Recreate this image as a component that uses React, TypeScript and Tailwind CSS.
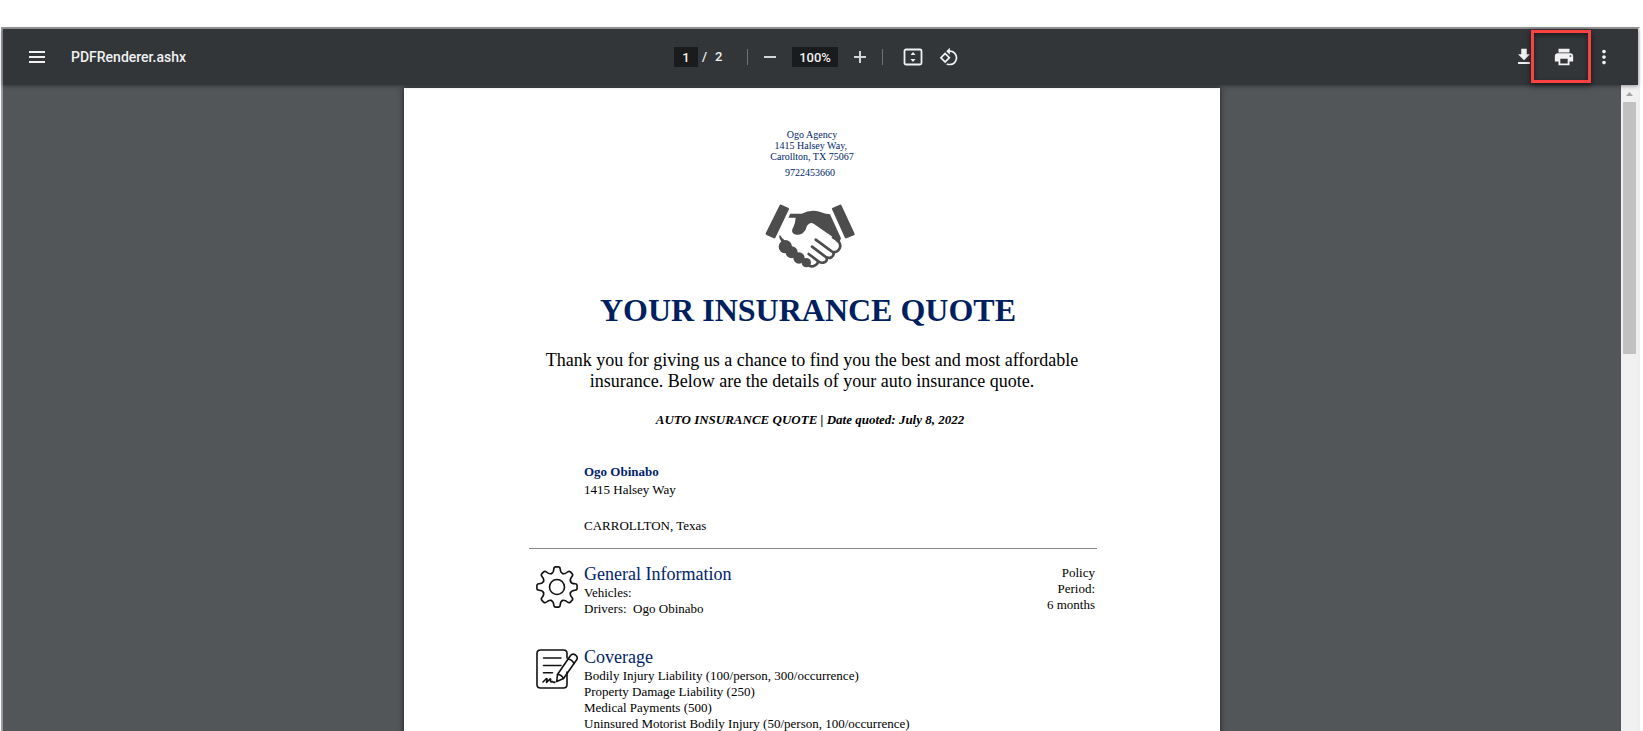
import React from "react";

const coverages = [
  "Bodily Injury Liability (100/person, 300/occurrence)",
  "Property Damage Liability (250)",
  "Medical Payments (500)",
  "Uninsured Motorist Bodily Injury (50/person, 100/occurrence)",
];

function IconButton({ label, children }: { label: string; children: React.ReactNode }) {
  return (
    <button type="button" aria-label={label} className="flex size-6 shrink-0 items-center justify-center">
      {children}
    </button>
  );
}

function Glyph({ d, className = "size-6" }: { d: string; className?: string }) {
  return (
    <svg viewBox="0 0 24 24" className={className} fill="currentColor" aria-hidden="true">
      <path d={d} />
    </svg>
  );
}

function Divider() {
  return <span className="h-4 w-px bg-white/30" />;
}

function Handshake() {
  return (
    <svg viewBox="76 268 270 192" className="h-16 w-[90px]" fill="#4d4d4d" role="img" aria-label="Handshake">
      <g stroke="#4d4d4d" strokeWidth="8" strokeLinejoin="round">
        <path d="M123 274 L144 283 L104 367 L82 357 Z" />
        <path d="M281 283 L302 274 L341 358 L319 367 Z" />
      </g>
      <path d="M152 297 H186 Q212 284 240 291 Q256 297 271 299 L304 371 Q301 380 298 384 Q290 374 276 365 L224 329 Q212 319 202 333 Q199 348 189 356 Q172 365 160 356 Q154 349 161 338 Q167 325 168 309 H146 Z" />
      <path d="M119 362 Q117 372 124 379 L129 385 L135 377 Q127 372 123 363 Z" />
      <circle cx="137" cy="396" r="20" />
      <circle cx="156" cy="413" r="18" />
      <circle cx="178" cy="430" r="17" />
      <circle cx="200" cy="444" r="14" />
      <g fill="none" stroke="#4d4d4d" strokeWidth="8" strokeLinecap="round" strokeLinejoin="round">
        <path d="M228 375 L276 410 C290 418 307 402 300 386 C297 379 290 374 280 368" />
        <path d="M217 396 L257 426 C270 435 285 426 281 413" />
        <path d="M207 418 L236 440 C250 449 263 442 261 431" />
        <path d="M203 449 Q214 460 226 452 Q236 447 235 440" />
      </g>
    </svg>
  );
}

function Gear() {
  return (
    <svg viewBox="0 0 42 42" className="size-[42px]" fill="none" stroke="#111" strokeWidth="1.6" strokeLinejoin="round" strokeLinecap="round" aria-hidden="true">
      <circle cx="21" cy="21" r="7.500" />
      {[0, 45, 90, 135, 180, 225, 270, 315].map((angle) => (
        <path
          key={angle}
          transform={`rotate(${angle} 21 21)`}
          d="M15.600 7.400 C17.200 6.800 17.600 6 17.800 3 C17.900 1.500 18.600 .9 19.800 .9 H22.200 C23.400 .9 24.100 1.500 24.200 3 C24.400 6 24.800 6.800 26.800 7.600"
        />
      ))}
    </svg>
  );
}

function SignedForm() {
  return (
    <svg viewBox="0 0 42 40" className="h-10 w-[42px]" fill="none" stroke="#111" strokeWidth="1.6" strokeLinecap="round" strokeLinejoin="round" aria-hidden="true">
      <path d="M31 9 V4.500 Q31 1 27.500 1 H4.500 Q1 1 1 4.500 V35.500 Q1 39 4.500 39 H27.500 Q31 39 31 35.500 V23" />
      <path d="M7.500 9 H25 M7.500 16.500 H25 M7.500 23.700 H16.500" />
      <path d="M7 33 L10 30 Q11.500 29 11 31 L10.500 33.500 L14 30 Q15 29.500 14.500 32 Q14.500 33.500 16.500 32.500 Q17.500 34 19 33" />
      <path d="M21.500 25.500 L34.500 6.500 Q36.500 4 39.500 6 Q42.500 8.500 40.500 11 L27.500 29.500 L20.700 32.500 Z" />
      <path d="M21.500 25.500 Q25.500 25.500 27.500 29.500 M32 10 Q36 10.500 38 14.500" />
    </svg>
  );
}

function Section({ icon, title, children }: { icon: React.ReactNode; title: string; children: React.ReactNode }) {
  return (
    <section className="flex pl-[7px]">
      <div className="w-12 shrink-0 pt-0.5">{icon}</div>
      <div className="min-w-0 flex-1">
        <h3 className="text-lg leading-[21px] text-[#00246b]">{title}</h3>
        <div className="flex justify-between">{children}</div>
      </div>
    </section>
  );
}

export default function App() {
  return (
    <main className="flex h-screen flex-col overflow-hidden bg-white pt-[27px] pr-[3px] pl-px">
      <div className="flex min-h-0 flex-1 flex-col border-t-2 border-r-2 border-l-2 border-t-[#999] border-r-[#eee] border-l-[#999] bg-[#525659]">
        <header className="relative z-10 grid h-14 shrink-0 grid-cols-[1fr_auto_1fr] items-center bg-[#323639] font-[Roboto,sans-serif] text-[13px] font-medium text-[#f1f1f1] shadow-[0_1px_4px_rgba(0,0,0,0.4)]">
          <div className="flex items-center gap-[22px] pl-[22px]">
            <IconButton label="Menu">
              <Glyph d="M4 6h16v2H4zM4 11h16v2H4zM4 16h16v2H4z" />
            </IconButton>
            <h1 className="text-sm font-medium">PDFRenderer.ashx</h1>
          </div>

          <div className="flex items-center pr-1.5">
            <input aria-label="Page number" defaultValue="1" className="h-5 w-6 bg-[#191b1c] text-center" />
            <span className="flex w-[49px] gap-2 pl-1">
              <span>/</span>
              <span>2</span>
            </span>
            <Divider />
            <div className="flex items-center gap-2.5 px-[10px]">
              <IconButton label="Zoom out">
                <Glyph className="size-6 opacity-85" d="M6 11h12v2H6z" />
              </IconButton>
              <input aria-label="Zoom level" defaultValue="100%" className="h-5 w-[46px] bg-[#191b1c] text-center" />
              <IconButton label="Zoom in">
                <Glyph className="size-6 opacity-85" d="M11 6h2v5h5v2h-5v5h-2v-5H6v-2h5z" />
              </IconButton>
            </div>
            <Divider />
            <div className="flex items-center gap-3 pl-[18px]">
              <IconButton label="Fit to page">
                <svg viewBox="0 0 24 24" className="size-6" fill="none" aria-hidden="true">
                  <rect x="3.500" y="4.500" width="17" height="15" rx="1.500" stroke="currentColor" strokeWidth="1.800" />
                  <path d="M12 7l2.500 3h-5zM12 17l-2.500-3h5z" fill="currentColor" />
                </svg>
              </IconButton>
              <IconButton label="Rotate counterclockwise">
                <Glyph d="M7.34 6.41L.86 12.900l6.490 6.480 6.490-6.480-6.500-6.490zM3.690 12.900l3.660-3.660L11 12.900l-3.660 3.660-3.650-3.660zm15.670-6.260C17.610 4.880 15.300 4 13 4V.760L8.760 5 13 9.240V6c1.790 0 3.580.680 4.950 2.050 2.730 2.730 2.730 7.170 0 9.900C16.580 19.320 14.790 20 13 20c-.970 0-1.940-.210-2.840-.610l-1.490 1.490C10.020 21.620 11.510 22 13 22c2.300 0 4.610-.880 6.360-2.640 3.520-3.510 3.520-9.210 0-12.720z" className="size-5" />
              </IconButton>
            </div>
          </div>

          <div className="flex items-center justify-end gap-4 pr-[22px]">
            <IconButton label="Download">
              <Glyph className="size-[22px]" d="M18.500 9H15V3H9v6H5.500l6.500 6.500L18.500 9zM5.500 17.500v2h13v-2z" />
            </IconButton>
            <div className="relative">
              <IconButton label="Print">
                <Glyph className="size-[22px]" d="M19 8H5c-1.660 0-3 1.340-3 3v6h4v4h12v-4h4v-6c0-1.660-1.340-3-3-3zm-3 11H8v-5h8v5zm3-7c-.550 0-1-.450-1-1s.450-1 1-1 1 .450 1 1-.450 1-1 1zm-1-9H6v4h12V3z" />
              </IconButton>
              <span className="pointer-events-none absolute -top-[15px] -left-[21px] h-[53px] w-[60px] border-3 border-[#fb4141] shadow-[0_2px_6px_rgba(0,0,0,0.6),inset_0_2px_5px_rgba(0,0,0,0.5)]" />
            </div>
            <IconButton label="More actions">
              <Glyph className="size-[22px]" d="M12 8c1.100 0 2-.900 2-2s-.900-2-2-2-2 .900-2 2 .900 2 2 2zm0 2c-1.100 0-2 .900-2 2s.900 2 2 2 2-.900 2-2-.900-2-2-2zm0 6c-1.100 0-2 .900-2 2s.900 2 2 2 2-.900 2-2-.900-2-2-2z" />
            </IconButton>
          </div>
        </header>

        <div className="flex min-h-0 flex-1">
          <div className="flex min-w-0 flex-1 justify-center overflow-hidden pt-[3px]">
            <article className="w-[816px] shrink-0 self-start bg-white px-[125px] pt-[41px] pb-20 font-['Liberation_Serif',serif] text-[13px] leading-4 text-black shadow-[0_0_6px_rgba(0,0,0,0.6)]">
              <header className="flex flex-col items-center text-center text-[#00246b]">
                <address className="text-[10px] leading-[11px] not-italic">
                  Ogo Agency
                  <br />
                  1415 Halsey Way,&nbsp;
                  <br />
                  Carollton, TX 75067
                  <br />
                  <span className="mt-[5px] block pr-1">9722453660</span>
                </address>
                <div className="mt-[26px] pr-1">
                  <Handshake />
                </div>
                <h2 className="mt-6 pr-2 text-[32px] leading-9 font-bold whitespace-nowrap text-[#001f5f]">
                  YOUR INSURANCE QUOTE
                </h2>
              </header>
              <p className="mt-[22px] text-center text-lg leading-[21px]">
                Thank you for giving us a chance to find you the best and most affordable insurance. Below are the
                details of your auto insurance quote.
              </p>
              <p className="mt-5 pr-1 text-center font-bold italic">AUTO INSURANCE QUOTE | Date quoted: July 8, 2022</p>

              <div className="mt-[35px] pl-[55px] leading-[18px]">
                <p className="font-bold text-[#00246b]">Ogo Obinabo</p>
                <p>1415 Halsey Way</p>
                <p className="mt-[18px]">CARROLLTON, Texas</p>
              </div>

              <hr className="mt-[13px] mr-[-2px] mb-[15px] border-t border-t-[#888]" />

              <Section icon={<Gear />} title="General Information">
                <div>
                  <p>Vehicles:</p>
                  <p className="whitespace-pre">Drivers:  Ogo Obinabo</p>
                </div>
                <p className="-mt-5 w-12 text-right whitespace-nowrap">
                  Policy
                  <br />
                  Period:
                  <br />6 months
                </p>
              </Section>

              <div className="mt-[30px]">
                <Section icon={<SignedForm />} title="Coverage">
                  <ul>
                    {coverages.map((item) => (
                      <li key={item}>{item}</li>
                    ))}
                  </ul>
                </Section>
              </div>
            </article>
          </div>
          <div className="flex w-[17px] shrink-0 flex-col items-center bg-[#f1f1f1]" aria-hidden="true">
            <svg viewBox="0 0 17 17" className="size-[17px]" fill="#a3a3a3">
              <path d="M5 11 L8.500 7 L12 11 Z" />
            </svg>
            <div className="h-[39%] w-[13px] bg-[#c1c1c1]" />
          </div>
        </div>
      </div>
    </main>
  );
}
